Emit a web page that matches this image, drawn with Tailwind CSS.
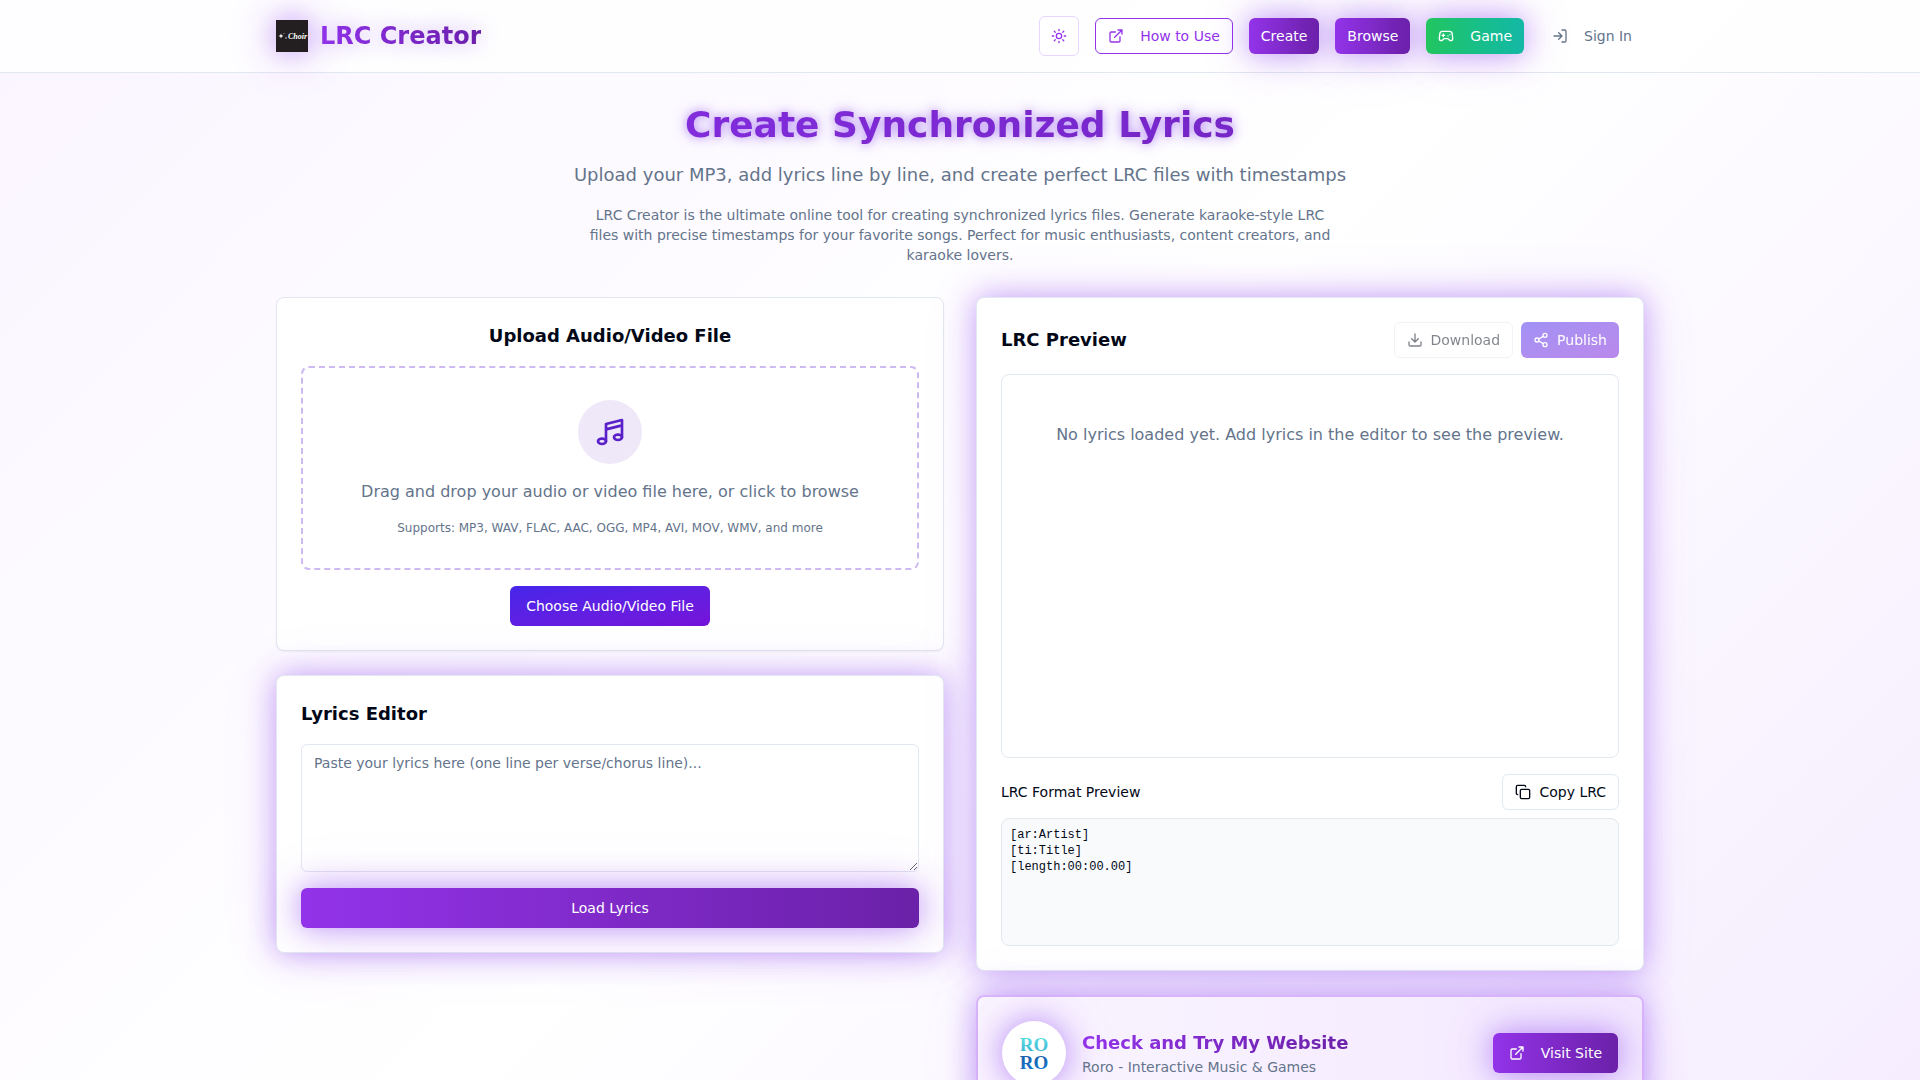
<!DOCTYPE html>
<html lang="en">
<head>
    <meta charset="UTF-8">
    <meta name="viewport" content="width=device-width, initial-scale=1.0">
    <title>LRC Creator</title>
    <script src="https://cdn.jsdelivr.net/npm/@tailwindcss/browser@4"></script>
</head>
<body class="min-h-screen font-['DejaVu_Sans',sans-serif] text-[#020817] bg-[linear-gradient(135deg,#faf5ff_0%,#ffffff_50%,#f5edff_100%)]">
    <header class="border-b border-[#e2e8f0] bg-white/80">
        <div class="max-w-[1400px] mx-auto px-4 py-4 flex items-center justify-between">
            <a href="#" class="flex items-center gap-3">
                <svg class="size-8 bg-[#231f20] shadow-[0_0_30px_rgba(130,50,237,0.5),0_0_60px_rgba(168,85,247,0.15)]" viewBox="0 0 32 32" role="img" aria-label="Choir">
                    <path d="M5 13.500l.7 1.800 1.800.7-1.800.7-.7 1.800-.7-1.800-1.800-.7 1.800-.7z" fill="#fff"/>
                    <circle cx="8" cy="13.500" r=".5" fill="#bbb"/>
                    <circle cx="10" cy="18" r=".8" fill="#ccc"/>
                    <text x="12" y="18.500" font-family="'Liberation Serif', serif" font-size="8" font-style="italic" font-weight="bold" fill="#fff">Choir</text>
                </svg>
                <span class="text-2xl font-bold bg-linear-to-r from-[#9333ea] to-[#6b21a8] bg-clip-text text-transparent [text-shadow:0_0_20px_rgba(130,50,237,0.35)]">LRC Creator</span>
            </a>
            <nav class="flex items-center gap-4 text-sm">
                <button type="button" aria-label="Toggle theme" class="size-10 flex items-center justify-center rounded-md border border-[#e9d5ff] bg-white text-[#9333ea]">
                    <svg class="size-4" viewBox="0 0 24 24" fill="none" stroke="currentColor" stroke-width="2" stroke-linecap="round" stroke-linejoin="round"><circle cx="12" cy="12" r="4"/><path d="M12 2v2M12 20v2M4.930 4.930l1.410 1.410M17.660 17.660l1.410 1.410M2 12h2M20 12h2M6.340 17.660l-1.410 1.410M19.070 4.930l-1.410 1.410"/></svg>
                </button>
                <a href="#" class="h-9 px-3 flex items-center gap-4 rounded-md border border-[#9333ea] bg-white text-[#9333ea]">
                    <svg class="size-4" viewBox="0 0 24 24" fill="none" stroke="currentColor" stroke-width="2" stroke-linecap="round" stroke-linejoin="round"><path d="M15 3h6v6M10 14 21 3M18 13v6a2 2 0 0 1-2 2H5a2 2 0 0 1-2-2V8a2 2 0 0 1 2-2h6"/></svg>
                    How to Use
                </a>
                <a href="#" class="h-9 px-3 flex items-center rounded-md text-white bg-linear-to-r from-[#9333ea] to-[#6b21a8] shadow-[0_0_30px_rgba(130,50,237,0.5),0_0_60px_rgba(168,85,247,0.15)]">Create</a>
                <a href="#" class="h-9 px-3 flex items-center rounded-md text-white bg-linear-to-r from-[#9333ea] to-[#6b21a8] shadow-[0_0_30px_rgba(130,50,237,0.5),0_0_60px_rgba(168,85,247,0.15)]">Browse</a>
                <a href="#" class="h-9 px-3 flex items-center gap-4 rounded-md text-white bg-linear-to-r from-[#22c55e] to-[#14b8a6] shadow-[0_0_30px_rgba(130,50,237,0.5),0_0_60px_rgba(168,85,247,0.15)]">
                    <svg class="size-4" viewBox="0 0 24 24" fill="none" stroke="currentColor" stroke-width="2" stroke-linecap="round" stroke-linejoin="round"><path d="M6 11h4M8 9v4M15 12h.01M18 10h.01M17.320 5H6.680a4 4 0 0 0-3.978 3.590C2.604 9.416 2 14.456 2 16a3 3 0 0 0 3 3c1 0 1.500-.5 2-1l1.414-1.414A2 2 0 0 1 9.828 16h4.344a2 2 0 0 1 1.414.586L17 18c.5.5 1 1 2 1a3 3 0 0 0 3-3c0-1.545-.604-6.584-.685-7.258A4 4 0 0 0 17.320 5z"/></svg>
                    Game
                </a>
                <a href="#" class="h-9 px-3 flex items-center gap-4 rounded-md text-[#64748b]">
                    <svg class="size-4" viewBox="0 0 24 24" fill="none" stroke="currentColor" stroke-width="2" stroke-linecap="round" stroke-linejoin="round"><path d="M15 3h4a2 2 0 0 1 2 2v14a2 2 0 0 1-2 2h-4M10 17l5-5-5-5M15 12H3"/></svg>
                    Sign In
                </a>
            </nav>
        </div>
    </header>

    <main class="max-w-[1400px] mx-auto px-4 py-8">
        <div class="mb-8 text-center text-[#64748b]">
            <h1 class="mb-4 text-4xl font-bold bg-linear-to-r from-[#9333ea] to-[#6b21a8] bg-clip-text text-transparent [text-shadow:0_0_10px_rgba(124,45,237,0.5),0_0_20px_rgba(124,58,237,0.2)]">Create Synchronized Lyrics</h1>
            <p class="text-lg/7">Upload your MP3, add lyrics line by line, and create perfect LRC files with timestamps</p>
            <p class="mt-4 mx-auto max-w-3xl px-3 text-sm">LRC Creator is the ultimate online tool for creating synchronized lyrics files. Generate karaoke-style LRC files with precise timestamps for your favorite songs. Perfect for music enthusiasts, content creators, and karaoke lovers.</p>
        </div>

        <div class="grid grid-cols-2 gap-8 items-start">
            <div class="flex flex-col gap-6">
                <section class="p-6 rounded-lg border border-[#e2e8f0] bg-white shadow-[0_1px_2px_rgba(0,0,0,0.05)] text-center">
                    <h2 class="mb-4 text-lg/7 font-bold">Upload Audio/Video File</h2>
                    <div class="mb-4 p-8 flex flex-col items-center gap-4 rounded-lg border-2 border-dashed border-[#cdbaf0] text-[#64748b]">
                        <div class="size-16 flex items-center justify-center rounded-full bg-[#eee8f9] text-[#5b21c9]">
                            <svg class="size-8" viewBox="0 0 24 24" fill="none" stroke="currentColor" stroke-width="2" stroke-linecap="round" stroke-linejoin="round"><path d="M9 19V6l12-3v13M9 10l12-3"/><ellipse cx="6" cy="19" rx="3" ry="2"/><ellipse cx="18" cy="16" rx="3" ry="2"/></svg>
                        </div>
                        <p>Drag and drop your audio or video file here, or click to browse</p>
                        <p class="text-xs">Supports: MP3, WAV, FLAC, AAC, OGG, MP4, AVI, MOV, WMV, and more</p>
                    </div>
                    <button type="button" class="h-10 px-4 rounded-md text-sm text-white bg-linear-to-br from-[#4625eb] to-[#7612d9]">Choose Audio/Video File</button>
                </section>

                <section class="p-6 rounded-lg border border-[#e2e8f0] bg-white shadow-[0_0_30px_rgba(130,50,237,0.45),0_0_60px_rgba(168,85,247,0.1)]">
                    <h2 class="mb-4 text-lg/7 font-bold"><label for="lyrics">Lyrics Editor</label></h2>
                    <textarea id="lyrics" placeholder="Paste your lyrics here (one line per verse/chorus line)..." class="block w-full h-32 mb-4 px-3 py-2 rounded-md border border-[#e2e8f0] bg-white text-sm placeholder:text-[#64748b]"></textarea>
                    <button type="button" class="relative w-full h-10 rounded-md text-sm text-white bg-linear-to-r from-[#9333ea] to-[#6b21a8] shadow-[0_0_30px_rgba(130,50,237,0.5),0_0_60px_rgba(168,85,247,0.15)]">Load Lyrics</button>
                </section>
            </div>

            <div class="flex flex-col gap-6">
                <section class="p-6 rounded-lg border border-[#e2e8f0] bg-white shadow-[0_0_30px_rgba(130,50,237,0.45),0_0_60px_rgba(168,85,247,0.1)]">
                    <div class="mb-4 flex items-center justify-between">
                        <h2 class="text-lg/7 font-bold">LRC Preview</h2>
                        <div class="flex gap-2 text-sm">
                            <button type="button" disabled class="h-9 px-3 flex items-center gap-2 rounded-md border border-[#e2e8f0] bg-white opacity-50">
                                <svg class="size-4" viewBox="0 0 24 24" fill="none" stroke="currentColor" stroke-width="2" stroke-linecap="round" stroke-linejoin="round"><path d="M21 15v4a2 2 0 0 1-2 2H5a2 2 0 0 1-2-2v-4M7 10l5 5 5-5M12 15V3"/></svg>
                                Download
                            </button>
                            <button type="button" disabled class="h-9 px-3 flex items-center gap-2 rounded-md text-white bg-linear-to-br from-[#4625eb] to-[#7612d9] opacity-50">
                                <svg class="size-4" viewBox="0 0 24 24" fill="none" stroke="currentColor" stroke-width="2" stroke-linecap="round" stroke-linejoin="round"><circle cx="18" cy="5" r="3"/><circle cx="6" cy="12" r="3"/><circle cx="18" cy="19" r="3"/><path d="M8.590 13.510l6.830 3.980M15.410 6.510l-6.820 3.980"/></svg>
                                Publish
                            </button>
                        </div>
                    </div>
                    <div class="h-96 mb-4 p-4 rounded-lg border border-[#e2e8f0]">
                        <p class="py-8 text-center text-[#64748b]">No lyrics loaded yet. Add lyrics in the editor to see the preview.</p>
                    </div>
                    <div class="mb-2 flex items-center justify-between text-sm">
                        <h3>LRC Format Preview</h3>
                        <button type="button" class="h-9 px-3 flex items-center gap-2 rounded-md border border-[#e2e8f0] bg-white">
                            <svg class="size-4" viewBox="0 0 24 24" fill="none" stroke="currentColor" stroke-width="2" stroke-linecap="round" stroke-linejoin="round"><rect x="8" y="8" width="14" height="14" rx="2"/><path d="M4 16c-1.100 0-2-.9-2-2V4c0-1.100.9-2 2-2h10c1.100 0 2 .9 2 2"/></svg>
                            Copy LRC
                        </button>
                    </div>
                    <pre class="h-32 p-2 rounded-lg border border-[#e2e8f0] bg-[#f8fafc] font-['Liberation_Mono',monospace] text-xs">[ar:Artist]
[ti:Title]
[length:00:00.00]</pre>
                </section>

                <section class="p-6 flex items-center gap-4 rounded-lg border-2 border-[#d8b4fe] bg-linear-to-r from-[#faf5ff] to-[#f3e8ff] shadow-[0_0_30px_rgba(130,50,237,0.45),0_0_60px_rgba(168,85,247,0.1)]">
                    <svg class="size-16 rounded-full bg-white shadow-[0_0_30px_rgba(130,50,237,0.5),0_0_60px_rgba(168,85,247,0.15)]" viewBox="0 0 64 64" role="img" aria-label="Roro">
                        <defs>
                            <linearGradient id="roro" gradientUnits="userSpaceOnUse" x1="0" y1="16" x2="0" y2="49">
                                <stop offset="0" stop-color="#5be0e0"/>
                                <stop offset=".45" stop-color="#3fb4d6"/>
                                <stop offset=".55" stop-color="#1c5fa8"/>
                                <stop offset="1" stop-color="#1676cc"/>
                            </linearGradient>
                        </defs>
                        <g fill="url(#roro)" font-family="'Liberation Serif', serif" font-size="19" font-weight="bold" text-anchor="middle">
                            <text x="32" y="30">RO</text>
                            <text x="32" y="48">RO</text>
                        </g>
                    </svg>
                    <div class="flex-1">
                        <h2 class="w-fit text-lg/7 font-bold bg-linear-to-r from-[#9333ea] to-[#6b21a8] bg-clip-text text-transparent">Check and Try My Website</h2>
                        <p class="text-sm text-[#64748b]">Roro - Interactive Music &amp; Games</p>
                    </div>
                    <a href="#" class="h-10 px-4 flex items-center gap-4 rounded-md text-sm text-white bg-linear-to-r from-[#9333ea] to-[#6b21a8] shadow-[0_0_30px_rgba(130,50,237,0.5),0_0_60px_rgba(168,85,247,0.15)]">
                        <svg class="size-4" viewBox="0 0 24 24" fill="none" stroke="currentColor" stroke-width="2" stroke-linecap="round" stroke-linejoin="round"><path d="M15 3h6v6M10 14 21 3M18 13v6a2 2 0 0 1-2 2H5a2 2 0 0 1-2-2V8a2 2 0 0 1 2-2h6"/></svg>
                        Visit Site
                    </a>
                </section>
            </div>
        </div>
    </main>
</body>
</html>
